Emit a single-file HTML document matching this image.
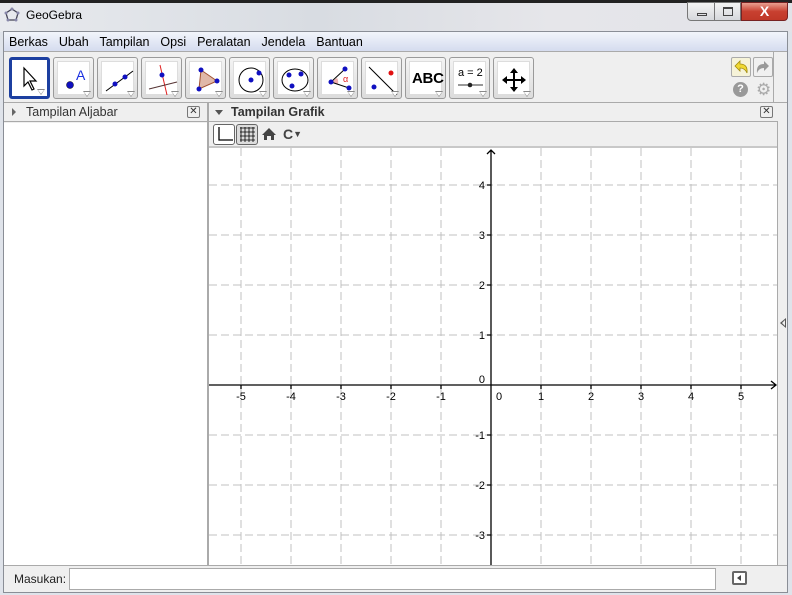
<!DOCTYPE html>
<html><head><meta charset="utf-8"><style>
*{margin:0;padding:0;box-sizing:border-box}
body{width:792px;height:595px;overflow:hidden;position:relative;font-family:"Liberation Sans",sans-serif;font-size:12px;color:#000;background:#dfe3ea}
.a{position:absolute}
.tb{position:absolute;top:57px;width:41px;height:42px;border:1px solid #9a9a9a;border-radius:3px;background:linear-gradient(#f4f4f4,#dcdcdc)}
.tb .in{position:absolute;left:3px;top:3px;width:33px;height:34px;background:#fff;border:1px solid #ddd}
.tb .in svg{margin:1px 0 0 1px}
.tb .tri{position:absolute;right:2px;bottom:1px;width:0;height:0;border-left:4px solid transparent;border-right:4px solid transparent;border-top:6px solid #888}
.tb .tri:after{content:"";position:absolute;left:-3px;top:-5px;border-left:3px solid transparent;border-right:3px solid transparent;border-top:4px solid #fff}
</style></head><body>
<div class="a" style="left:0;top:0;width:792px;height:32px;background:linear-gradient(90deg,#e8eaee,#d8dce2 40%,#e6e6ea 70%,#e2e3e8)"></div>
<div class="a" style="left:0;top:0;width:792px;height:3px;background:#222"></div>
<svg class="a" style="left:4px;top:7px" width="16" height="16"><polygon points="8,2 14,6 12,13 4,13 2,6" fill="none" stroke="#445" stroke-width="1.3"/><circle cx="8" cy="2" r="1.5" fill="#88a"/><circle cx="14" cy="6" r="1.5" fill="#88a"/><circle cx="12" cy="13" r="1.5" fill="#88a"/><circle cx="4" cy="13" r="1.5" fill="#88a"/><circle cx="2" cy="6" r="1.5" fill="#88a"/></svg>
<div class="a" style="left:26px;top:8px;font-size:12px">GeoGebra</div>
<div class="a" style="left:687px;top:2px;width:28px;height:19px;border:1px solid #777;border-radius:0 0 0 4px;background:linear-gradient(#f4f4f4,#d6d8dc)"><div class="a" style="left:9px;top:10px;width:10px;height:3px;border:1px solid #444"></div></div>
<div class="a" style="left:714px;top:2px;width:27px;height:19px;border:1px solid #777;background:linear-gradient(#f4f4f4,#d6d8dc)"><div class="a" style="left:8px;top:4px;width:10px;height:9px;border:1px solid #444;border-top-width:2px"></div></div>
<div class="a" style="left:741px;top:2px;width:47px;height:19px;border:1px solid #722;border-radius:0 0 4px 0;background:linear-gradient(#e8a090,#c84030 50%,#c03828);color:#fff;font-weight:bold;font-size:14px;text-align:center;line-height:17px">X</div>
<div class="a" style="left:3px;top:31px;width:785px;height:562px;background:#efefef;border:1px solid #8a8e96"></div>
<div class="a" style="left:4px;top:32px;width:783px;height:20px;background:linear-gradient(#f2f5fb,#d5dcef);border-bottom:1px solid #aaa"></div>
<div class="a" style="left:9px;top:35px;font-size:12.5px;word-spacing:2px">Berkas&nbsp; Ubah&nbsp; Tampilan&nbsp; Opsi&nbsp; Peralatan&nbsp; Jendela&nbsp; Bantuan</div>
<div class="a" style="left:773px;top:52px;width:1px;height:50px;background:#aaa"></div>

<div class="tb" style="left:9px;border:3px solid #1c3fa0;background:#fff"><div class="in" style="left:1px;top:1px;width:33px;height:34px;border:none"><svg width="31" height="32"><path d="M10 6 L10 24 L14 20 L18 28 L20 27 L16 19 L22 19 Z" fill="#fff" stroke="#000" stroke-width="1.2"/></svg></div><div class="tri"></div></div>
<div class="tb" style="left:53px"><div class="in"><svg width="31" height="32"><circle cx="11" cy="22" r="3.5" fill="#1010c0" stroke="#000" stroke-width=".5"/><text x="17" y="17" fill="#1a30e0" font-size="14" font-family="Liberation Sans">A</text></svg></div><div class="tri"></div></div>
<div class="tb" style="left:97px"><div class="in"><svg width="31" height="32"><line x1="3" y1="28" x2="30" y2="8" stroke="#000"/><circle cx="12" cy="21" r="2.5" fill="#1010c0"/><circle cx="22" cy="14" r="2.5" fill="#1010c0"/></svg></div><div class="tri"></div></div>
<div class="tb" style="left:141px"><div class="in"><svg width="31" height="32"><line x1="13" y1="2" x2="20" y2="32" stroke="#e02020"/><line x1="2" y1="26" x2="30" y2="19" stroke="#553333"/><circle cx="15" cy="12" r="2.5" fill="#1010c0"/></svg></div><div class="tri"></div></div>
<div class="tb" style="left:185px"><div class="in"><svg width="31" height="32"><polygon points="10,7 26,18 8,26" fill="#e0b8a8" stroke="#a05030"/><circle cx="10" cy="7" r="2.5" fill="#1010c0"/><circle cx="26" cy="18" r="2.5" fill="#1010c0"/><circle cx="8" cy="26" r="2.5" fill="#1010c0"/></svg></div><div class="tri"></div></div>
<div class="tb" style="left:229px"><div class="in"><svg width="31" height="32"><circle cx="16" cy="17" r="12" fill="none" stroke="#000"/><circle cx="16" cy="17" r="2.5" fill="#1010c0"/><circle cx="24" cy="10" r="2.5" fill="#1010c0"/></svg></div><div class="tri"></div></div>
<div class="tb" style="left:273px"><div class="in"><svg width="31" height="32"><ellipse cx="16" cy="17" rx="13" ry="11" fill="none" stroke="#000"/><circle cx="10" cy="12" r="2.5" fill="#1010c0"/><circle cx="22" cy="11" r="2.5" fill="#1010c0"/><circle cx="13" cy="23" r="2.5" fill="#1010c0"/></svg></div><div class="tri"></div></div>
<div class="tb" style="left:317px"><div class="in"><svg width="31" height="32"><path d="M8 19 L14 15 A8 8 0 0 1 15 21 Z" fill="#f0b0b0"/><line x1="8" y1="19" x2="22" y2="6" stroke="#000"/><line x1="8" y1="19" x2="26" y2="25" stroke="#000"/><circle cx="8" cy="19" r="2.5" fill="#1010c0"/><circle cx="22" cy="6" r="2.5" fill="#1010c0"/><circle cx="26" cy="25" r="2.5" fill="#1010c0"/><text x="20" y="19" fill="#e02020" font-size="9">α</text></svg></div><div class="tri"></div></div>
<div class="tb" style="left:361px"><div class="in"><svg width="31" height="32"><line x1="2" y1="4" x2="30" y2="32" stroke="#000"/><circle cx="7" cy="24" r="2.5" fill="#1010c0"/><circle cx="24" cy="10" r="2.5" fill="#e01010"/></svg></div><div class="tri"></div></div>
<div class="tb" style="left:405px"><div class="in"><div style="font-size:15px;font-weight:bold;margin:8px 0 0 2px;letter-spacing:-.3px">ABC</div></div><div class="tri"></div></div>
<div class="tb" style="left:449px"><div class="in"><div style="font-size:11px;margin:5px 0 0 4px">a = 2</div><svg class="a" style="left:0;top:0" width="31" height="32"><line x1="3" y1="22" x2="28" y2="22" stroke="#333"/><circle cx="15" cy="22" r="2.3" fill="#222"/></svg></div><div class="tri"></div></div>
<div class="tb" style="left:493px"><div class="in"><svg width="31" height="32"><path d="M15 5 L19 10 L16 10 L16 16 L22 16 L22 13 L27 17 L22 21 L22 18 L16 18 L16 24 L19 24 L15 29 L11 24 L14 24 L14 18 L8 18 L8 21 L3 17 L8 13 L8 16 L14 16 L14 10 L11 10 Z" fill="#000"/></svg></div><div class="tri"></div></div>
<div class="a" style="left:731px;top:57px;width:20px;height:20px;border:1px solid #aaa;border-radius:2px;background:#f6f3d8"><svg width="18" height="18"><path d="M3 8 L8 3 L8 6 Q16 6 15 15 Q13 10 8 10 L8 13 Z" fill="#f0d830" stroke="#a08a10" stroke-width=".8"/></svg></div>
<div class="a" style="left:753px;top:57px;width:20px;height:20px;border:1px solid #aaa;border-radius:2px;background:#f0f0f0"><svg width="18" height="18"><path d="M15 8 L10 3 L10 6 Q2 6 3 15 Q5 10 10 10 L10 13 Z" fill="#999"/></svg></div>
<div class="a" style="left:733px;top:82px;width:15px;height:15px;border-radius:50%;background:#999;color:#fff;font-weight:bold;font-size:11px;text-align:center;line-height:15px">?</div>
<div class="a" style="left:756px;top:81px;font-size:17px;color:#aaa;line-height:17px">⚙</div>

<div class="a" style="left:4px;top:102px;width:783px;height:1px;background:#aaa"></div>
<div class="a" style="left:4px;top:103px;width:204px;height:19px;background:#efefef;border-bottom:1px solid #aaa"></div>
<div class="a" style="left:12px;top:108px;border-top:4px solid transparent;border-bottom:4px solid transparent;border-left:4px solid #666"></div>
<div class="a" style="left:26px;top:105px;font-size:12.5px;color:#333">Tampilan Aljabar</div>
<div class="a" style="left:187px;top:106px;width:13px;height:12px;border:1px solid #777;border-radius:2px;font-size:10px;line-height:10px;text-align:center;color:#333">✕</div>
<div class="a" style="left:4px;top:123px;width:204px;height:442px;background:#fff"></div>
<div class="a" style="left:207px;top:103px;width:2px;height:463px;background:#aaa"></div>
<div class="a" style="left:215px;top:110px;border-left:4px solid transparent;border-right:4px solid transparent;border-top:5px solid #555"></div>
<div class="a" style="left:231px;top:105px;font-size:12.5px;font-weight:bold;color:#333">Tampilan Grafik</div>
<div class="a" style="left:760px;top:106px;width:13px;height:12px;border:1px solid #777;border-radius:2px;font-size:10px;line-height:10px;text-align:center;color:#333">✕</div>
<div class="a" style="left:209px;top:121px;width:569px;height:1px;background:#aaa"></div>
<div class="a" style="left:213px;top:124px;width:22px;height:21px;border:1px solid #666;border-radius:3px;background:#fff"><svg width="20" height="19"><path d="M5 2 V15 H19" stroke="#000" fill="none" stroke-width="1.3"/></svg></div>
<div class="a" style="left:236px;top:124px;width:22px;height:21px;border:1px solid #666;border-radius:3px;background:#ddd"><svg width="20" height="19"><path d="M3 3H18M3 7H18M3 11H18M3 15H18M4 2V17M8 2V17M12 2V17M16 2V17" stroke="#000" stroke-width=".8"/></svg></div>
<svg class="a" style="left:261px;top:126px" width="16" height="16"><path d="M8 2 L15 9 L13 9 L13 14 L10 14 L10 10 L6 10 L6 14 L3 14 L3 9 L1 9 Z" fill="#444"/></svg>
<div class="a" style="left:283px;top:126px;font-size:14px;font-weight:bold;color:#444">C<span style="font-size:9px;vertical-align:2px">▼</span></div>
<div class="a" style="left:209px;top:146px;width:569px;height:2px;background:#c8c8c8"></div>
<svg class="a" style="left:209px;top:148px" width="569" height="418" viewBox="209 148 569 418">
<rect x="209" y="148" width="569" height="418" fill="#fff"/>
<g stroke="#c0c0c0" stroke-dasharray="8,4" stroke-width="1">
<path d="M241 148V566M291 148V566M341 148V566M391 148V566M441 148V566M541 148V566M591 148V566M641 148V566M691 148V566M741 148V566"/>
<path d="M209 185H778M209 235H778M209 285H778M209 335H778M209 435H778M209 485H778M209 535H778"/>
</g>
<g stroke="#000" stroke-width="1.3" fill="none">
<path d="M209 385H776M491 566V150M771 381L776 385L771 389M487 154L491 150L495 154"/>
<path d="M241 385v4M291 385v4M341 385v4M391 385v4M441 385v4M541 385v4M591 385v4M641 385v4M691 385v4M741 385v4M487 185h4M487 235h4M487 285h4M487 335h4M487 435h4M487 485h4M487 535h4"/>
</g>
<g font-family="Liberation Sans" font-size="11" fill="#000" text-anchor="middle">
<text x="241" y="400">-5</text><text x="291" y="400">-4</text><text x="341" y="400">-3</text><text x="391" y="400">-2</text><text x="441" y="400">-1</text><text x="499" y="400">0</text><text x="541" y="400">1</text><text x="591" y="400">2</text><text x="641" y="400">3</text><text x="691" y="400">4</text><text x="741" y="400">5</text>
</g>
<g font-family="Liberation Sans" font-size="11" fill="#000" text-anchor="end">
<text x="485" y="189">4</text><text x="485" y="239">3</text><text x="485" y="289">2</text><text x="485" y="339">1</text><text x="485" y="383">0</text><text x="485" y="439">-1</text><text x="485" y="489">-2</text><text x="485" y="539">-3</text>
</g>
</svg>
<div class="a" style="left:777px;top:122px;width:1px;height:444px;background:#aaa"></div>
<div class="a" style="left:780px;top:318px;border-top:5px solid transparent;border-bottom:5px solid transparent;border-right:6px solid #555"></div>
<div class="a" style="left:782px;top:320px;border-top:3px solid transparent;border-bottom:3px solid transparent;border-right:3px solid #efefef"></div>
<div class="a" style="left:4px;top:565px;width:783px;height:1px;background:#aaa"></div>
<div class="a" style="left:14px;top:572px;font-size:12px;color:#222">Masukan:</div>
<div class="a" style="left:69px;top:568px;width:647px;height:22px;background:#fff;border:1px solid #aaa"></div>
<div class="a" style="left:732px;top:571px;width:15px;height:14px;border:2px solid #666;border-radius:2px;background:#fff"><div class="a" style="left:3px;top:2px;border-top:3px solid transparent;border-bottom:3px solid transparent;border-right:4px solid #444"></div></div>
</body></html>
